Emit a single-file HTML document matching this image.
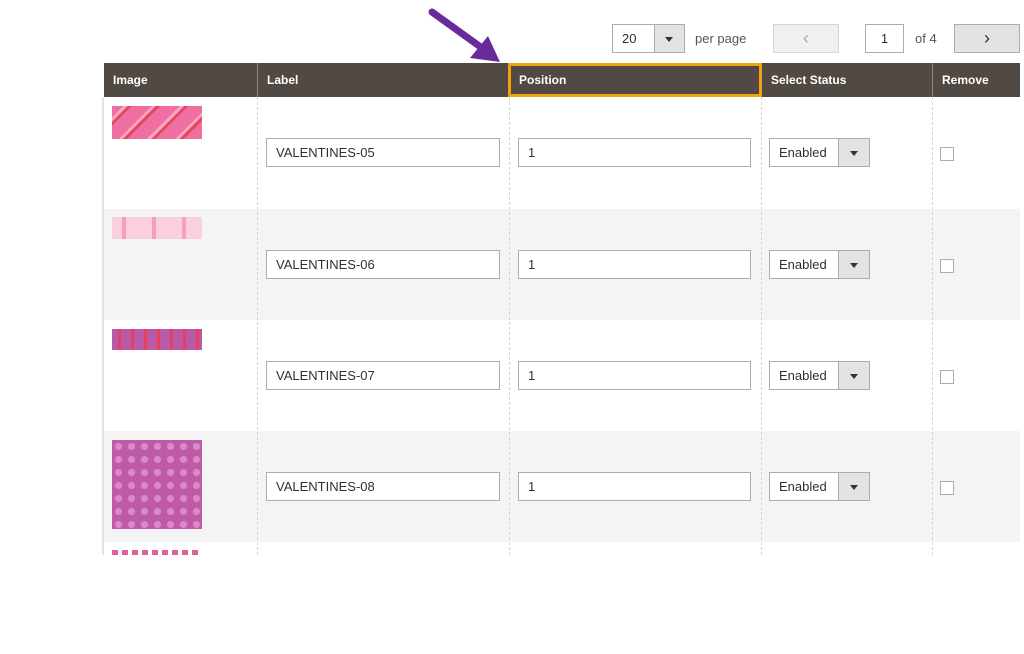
<!DOCTYPE html>
<html><head><style>
*{box-sizing:border-box;margin:0;padding:0}
html,body{width:1024px;height:555px}
body{background:#fff;font-family:"Liberation Sans",sans-serif;position:relative;overflow:hidden;color:#303030}
.a{position:absolute}
.hdr{top:63px;height:34px;background:#514943;color:#fff;font-weight:bold;font-size:12px;line-height:34px;padding-left:9px;border-left:1px solid #8a837e}
.row{left:104px;width:916px;height:111px}
.vl{width:0;border-left:1px dashed #d6d6d6}
.inp{height:29px;border:1px solid #adadad;background:#fff;font-size:13px;line-height:27px;padding-left:9px;color:#303030}
.sel{width:101px;height:29px;border:1px solid #adadad;background:#fff;font-size:13px;line-height:27px;padding-left:9px}
.sel:after{content:"";position:absolute;right:0;top:0;width:30px;height:27px;background:#e3e3e3;border-left:1px solid #adadad}
.sel i{position:absolute;right:11px;top:12px;border-left:4px solid transparent;border-right:4px solid transparent;border-top:5px solid #333;z-index:2}
.cb{width:14px;height:14px;border:1px solid #adadad;background:#fff}
</style></head><body>
<div class="a" style="left:612px;top:24px;width:73px;height:29px;border:1px solid #adadad;font-size:13px;line-height:27px;padding-left:9px">20<div class="a" style="right:0;top:0;width:30px;height:27px;background:#e3e3e3;border-left:1px solid #adadad"></div><i class="a" style="right:11px;top:12px;border-left:4px solid transparent;border-right:4px solid transparent;border-top:5px solid #333"></i></div>
<div class="a" style="left:695px;top:31px;font-size:13px;color:#555">per page</div>
<div class="a" style="left:773px;top:24px;width:66px;height:29px;border:1px solid #d6d6d6;background:#f0f0f0;color:#aaa;text-align:center;font-size:18px;line-height:26px">&#8249;</div>
<div class="a" style="left:865px;top:24px;width:39px;height:29px;border:1px solid #adadad;text-align:center;font-size:13px;line-height:27px">1</div>
<div class="a" style="left:915px;top:31px;font-size:13px;color:#555">of 4</div>
<div class="a" style="left:954px;top:24px;width:66px;height:29px;border:1px solid #adadad;background:#e3e3e3;color:#333;text-align:center;font-size:18px;line-height:26px">&#8250;</div>
<svg class="a" style="left:420px;top:0" width="90" height="70"><line x1="12" y1="12" x2="62" y2="48" stroke="#6a2b9a" stroke-width="7" stroke-linecap="round"/><polygon points="80,62 50,58 68,36" fill="#6a2b9a"/></svg>
<div class="a hdr" style="left:104px;width:153px;border-left:none">Image</div>
<div class="a hdr" style="left:257px;width:252px">Label</div>
<div class="a hdr" style="left:509px;width:252px">Position</div>
<div class="a hdr" style="left:761px;width:171px">Select Status</div>
<div class="a hdr" style="left:932px;width:88px">Remove</div>
<div class="a" style="left:508px;top:63px;width:254px;height:34px;border:3px solid #f0a30a"></div>
<div class="a row" style="top:97px;background:#fff"></div>
<div class="a row" style="top:209px;background:#f4f4f4"></div>
<div class="a row" style="top:320px;background:#fff"></div>
<div class="a row" style="top:431px;background:#f4f4f4"></div>
<div class="a row" style="top:543px;background:#fff"></div>
<div class="a" style="left:102px;top:97px;width:2px;height:458px;background:#e3e3e3"></div>
<div class="a vl" style="left:257px;top:97px;height:458px"></div>
<div class="a vl" style="left:509px;top:97px;height:458px"></div>
<div class="a vl" style="left:761px;top:97px;height:458px"></div>
<div class="a vl" style="left:932px;top:97px;height:458px"></div>
<div class="a" style="left:112px;top:106px;width:90px;height:33px;background:repeating-linear-gradient(135deg,#ee6fa0 0 8px,#f9a5c3 8px 11px,#e2485f 11px 14px,#ee6fa0 14px 20px)"></div>
<div class="a" style="left:112px;top:217px;width:90px;height:22px;background:repeating-linear-gradient(90deg,#fbd0dc 0 10px,#f4a0bb 10px 14px,#fbd0dc 14px 30px)"></div>
<div class="a" style="left:112px;top:329px;width:90px;height:21px;background:repeating-linear-gradient(90deg,#b85aa5 0 6px,#e8405a 6px 9px,#b85aa5 9px 13px)"></div>
<div class="a" style="left:112px;top:440px;width:90px;height:89px;background:radial-gradient(circle,#d98bc8 3px,#bf5aa8 4px) 0 0/13px 13px"></div>
<div class="a" style="left:112px;top:550px;width:90px;height:5px;background:repeating-linear-gradient(90deg,#e0609a 0 6px,#fff 6px 10px)"></div>
<div class="a inp" style="left:266px;top:138px;width:234px">VALENTINES-05</div>
<div class="a inp" style="left:518px;top:138px;width:233px">1</div>
<div class="a sel" style="left:769px;top:138px">Enabled<i></i></div>
<div class="a cb" style="left:940px;top:147px"></div>
<div class="a inp" style="left:266px;top:250px;width:234px">VALENTINES-06</div>
<div class="a inp" style="left:518px;top:250px;width:233px">1</div>
<div class="a sel" style="left:769px;top:250px">Enabled<i></i></div>
<div class="a cb" style="left:940px;top:259px"></div>
<div class="a inp" style="left:266px;top:361px;width:234px">VALENTINES-07</div>
<div class="a inp" style="left:518px;top:361px;width:233px">1</div>
<div class="a sel" style="left:769px;top:361px">Enabled<i></i></div>
<div class="a cb" style="left:940px;top:370px"></div>
<div class="a inp" style="left:266px;top:472px;width:234px">VALENTINES-08</div>
<div class="a inp" style="left:518px;top:472px;width:233px">1</div>
<div class="a sel" style="left:769px;top:472px">Enabled<i></i></div>
<div class="a cb" style="left:940px;top:481px"></div>
</body></html>
